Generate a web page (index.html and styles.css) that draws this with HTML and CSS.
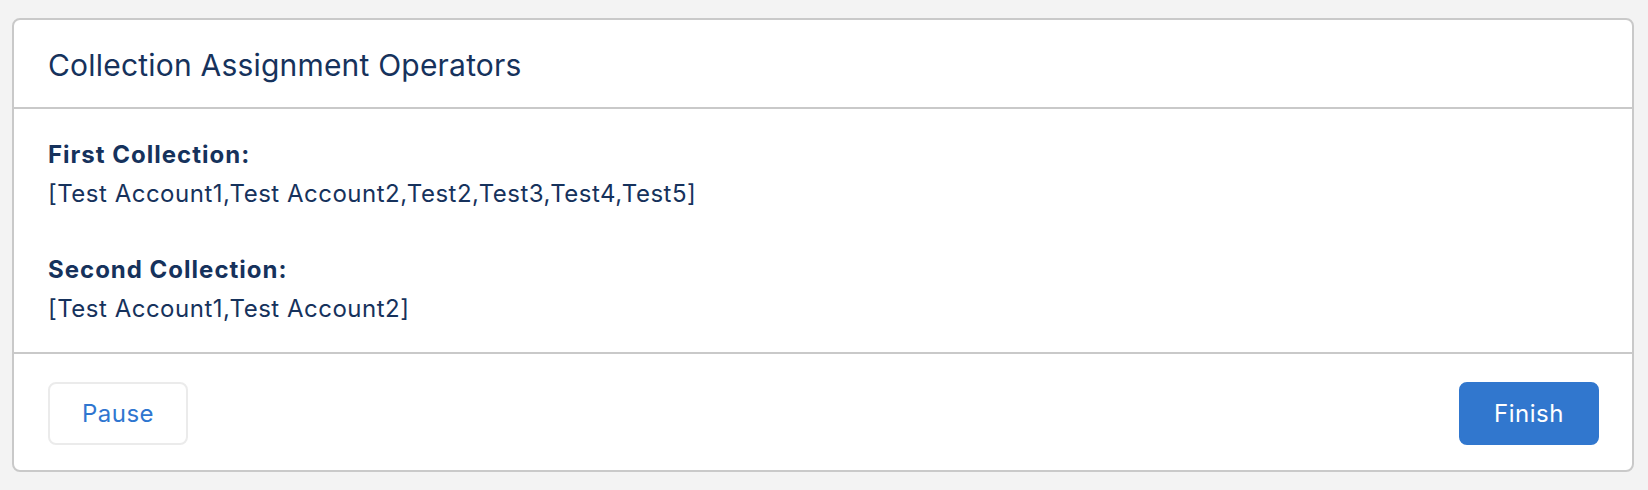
FILE: index.html
```html
<!DOCTYPE html>
<html lang="en">
<head>
<meta charset="utf-8">
<title>Collection Assignment Operators</title>
<link rel="stylesheet" href="styles.css">
</head>
<body>
<div class="card">
  <div class="card-header">
    <h1 class="title">Collection Assignment Operators</h1>
  </div>
  <div class="card-body">
    <div class="field">
      <div class="label">First Collection:</div>
      <div class="value">[Test Account1,Test Account2,Test2,Test3,Test4,Test5]</div>
    </div>
    <div class="field">
      <div class="label">Second Collection:</div>
      <div class="value">[Test Account1,Test Account2]</div>
    </div>
  </div>
  <div class="card-footer">
    <button class="btn btn-neutral">Pause</button>
    <button class="btn btn-brand">Finish</button>
  </div>
</div>
</body>
</html>
```

FILE: styles.css
```css
* { box-sizing: border-box; }
html, body { margin: 0; padding: 0; }
body {
  background: #f3f3f3;
  font-family: Inter, "Liberation Sans", sans-serif;
  color: #16325c;
  padding: 18px 14px 0 12px;
}
.card {
  background: #fff;
  border: 2px solid #c9c9c9;
  border-radius: 8px;
}
.card-header {
  padding: 27px 32px 24px 34px;
  border-bottom: 2px solid #c9c9c9;
}
.title {
  margin: 0;
  font-size: 30px;
  line-height: 36px;
  font-weight: 400;
  letter-spacing: 0.2px;
}
.card-body {
  padding: 26px 34px 24px 34px;
  font-size: 24px;
  line-height: 39px;
  letter-spacing: 0.5px;
}
.field + .field { margin-top: 37px; }
.label { font-weight: 700; letter-spacing: 1px; }
.card-footer {
  border-top: 2px solid #c9c9c9;
  padding: 28px 33px 25px 34px;
  display: flex;
  justify-content: space-between;
  align-items: center;
}
.btn {
  font-family: Inter, "Liberation Sans", sans-serif;
  font-size: 24px;
  letter-spacing: 0.5px;
  height: 63px;
  width: 140px;
  border-radius: 8px;
  cursor: pointer;
}
.btn-neutral {
  background: #fff;
  border: 2px solid #ebebeb;
  color: #2f76d0;
}
.btn-brand {
  background: #3177ce;
  border: 2px solid #3177ce;
  color: #fff;
}
```
